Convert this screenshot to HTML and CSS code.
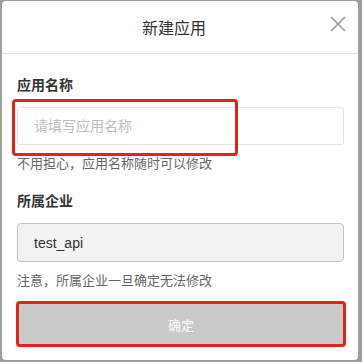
FILE: index.html
```html
<!DOCTYPE html>
<html lang="zh-CN">
<head>
  <meta charset="UTF-8">
  <meta name="viewport" content="width=device-width, initial-scale=1.0">
  <title>新建应用</title>
  <link rel="stylesheet" href="styles.css">
</head>
<body>
  <div class="modal">
    <div class="modal-header">
      <h2>新建应用</h2>
      <button class="close-btn" aria-label="关闭">
        <svg width="16" height="16" viewBox="0 0 16 16">
          <path d="M1 1 L15 15 M15 1 L1 15" stroke="#9a9a9a" stroke-width="1.6" fill="none"/>
        </svg>
      </button>
    </div>
    <div class="modal-body">
      <label class="field-label">应用名称</label>
      <div class="field">
        <input type="text" class="text-input" placeholder="请填写应用名称">
        <span class="mark"></span>
      </div>
      <p class="hint">不用担心，应用名称随时可以修改</p>

      <label class="field-label second">所属企业</label>
      <div class="field">
        <input type="text" class="text-input disabled" value="test_api" disabled>
      </div>
      <p class="hint">注意，所属企业一旦确定无法修改</p>

      <button class="submit-btn">确定</button>
    </div>
  </div>
</body>
</html>
```

FILE: styles.css
```css
body {
  margin: 0;
  background-color: #9e9e9e;
  font-family: "Noto Sans CJK SC", "Liberation Sans", sans-serif;
}
.modal {
  width: 356px;
  height: 359px;
  margin: 1px 0 0 2px;
  background-color: #fff;
  border-radius: 4px;
}
.modal-header {
  height: 52px;
  border-bottom: 1px solid #e6e6e6;
  display: flex;
  align-items: center;
  justify-content: center;
  position: relative;
}
.modal-header h2 {
  margin: 0;
  font-size: 16px;
  font-weight: normal;
  color: #333;
  margin-left: -12px;
}
.close-btn {
  position: absolute;
  top: 15px;
  right: 12px;
  background: none;
  border: none;
  padding: 0;
  cursor: pointer;
  line-height: 0;
}
.modal-body {
  padding: 20px 14px 0 15px;
  display: flex;
  flex-direction: column;
}
.field-label {
  font-size: 14px;
  font-weight: bold;
  color: #333;
  line-height: 20px;
}
.field-label.second {
  margin-top: 18px;
}
.field {
  position: relative;
  margin-top: 13px;
}
.text-input {
  box-sizing: border-box;
  width: 100%;
  height: 38px;
  border: 1px solid #e4e4e4;
  border-radius: 3px;
  padding: 0 16px;
  font-size: 14px;
  font-family: "Liberation Sans", "Noto Sans CJK SC", sans-serif;
  color: #333;
  background: #fff;
  outline: none;
}
.text-input::placeholder {
  color: #bdbdbd;
  font-family: "Noto Sans CJK SC", sans-serif;
}
.text-input.disabled {
  background-color: #f2f2f2;
  border-color: #c4c4c4;
  color: #333;
  height: 39px;
  border-radius: 4px;
}
.mark {
  position: absolute;
  left: -5px;
  top: -8px;
  width: 220px;
  height: 51px;
  border: 3px solid #e3231b;
  border-radius: 4px;
}
.hint {
  margin: 9px 0 0;
  font-size: 13px;
  line-height: 18px;
  color: #666;
}
.hint + .field-label {
  margin-top: 18px;
}
.submit-btn {
  margin: 12px 0 0 -1px;
  width: 330px;
  height: 46px;
  border: 3px solid #e3231b;
  border-radius: 4px;
  background-color: #c9c9c9;
  color: #fff;
  font-size: 13px;
  font-family: "Noto Sans CJK SC", sans-serif;
  cursor: pointer;
}
```
